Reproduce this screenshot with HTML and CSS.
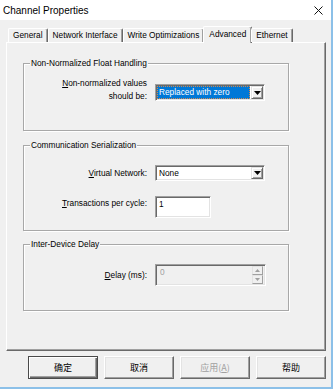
FILE: index.html
```html
<!DOCTYPE html>
<html>
<head>
<meta charset="utf-8">
<link rel="stylesheet" href="styles.css">
</head>
<body>
<div class="window">
  <div class="titlebar">
    <span class="title">Channel Properties</span>
    <svg class="close" width="9" height="9" viewBox="0 0 9 9"><path d="M0.5 0.5 L8.5 8.5 M8.5 0.5 L0.5 8.5" stroke="#111" stroke-width="1" fill="none"/></svg>
  </div>
  <div class="tabs">
    <div class="tab">General</div>
    <div class="tab">Network Interface</div>
    <div class="tab">Write Optimizations</div>
    <div class="tab active">Advanced</div>
    <div class="tab">Ethernet</div>
  </div>
  <div class="panel">
    <div class="group g1">
      <div class="legend">Non-Normalized Float Handling</div>
      <div class="row row-end">
        <div class="label"><u>N</u>on-normalized values<br>should be:</div>
        <div class="combo combo-sel">
          <div class="value"><span class="hl">Replaced with zero</span></div>
          <div class="drop"><svg width="7" height="4" viewBox="0 0 7 4"><path d="M0 0 H7 L3.5 4 Z" fill="#000"/></svg></div>
        </div>
      </div>
    </div>
    <div class="group g2">
      <div class="legend">Communication Serialization</div>
      <div class="row">
        <div class="label"><u>V</u>irtual Network:</div>
        <div class="combo">
          <div class="value"><span class="plain">None</span></div>
          <div class="drop"><svg width="7" height="4" viewBox="0 0 7 4"><path d="M0 0 H7 L3.5 4 Z" fill="#000"/></svg></div>
        </div>
      </div>
      <div class="row row-top">
        <div class="label label-top"><u>T</u>ransactions per cycle:</div>
        <div class="edit">1</div>
      </div>
    </div>
    <div class="group g3">
      <div class="legend">Inter-Device Delay</div>
      <div class="row">
        <div class="label"><u>D</u>elay (ms):</div>
        <div class="spin">
          <div class="spin-value">0</div>
          <div class="spin-btns">
            <div class="sbtn"><svg width="5" height="3" viewBox="0 0 5 3"><path d="M0 3 H5 L2.5 0 Z" fill="#a0a0a0"/></svg></div>
            <div class="sbtn"><svg width="5" height="3" viewBox="0 0 5 3"><path d="M0 0 H5 L2.5 3 Z" fill="#a0a0a0"/></svg></div>
          </div>
        </div>
      </div>
    </div>
  </div>
  <div class="buttons">
    <div class="btn btn-default">确定</div>
    <div class="btn">取消</div>
    <div class="btn btn-disabled">应用(<u>A</u>)</div>
    <div class="btn">帮助</div>
  </div>
</div>
</body>
</html>
```
FILE: styles.css
```css
html, body {
  margin: 0;
  padding: 0;
  background: #f0f0f0;
}
body {
  font-family: "Liberation Sans", Arial, sans-serif;
  font-size: 8.3px;
  color: #000;
}
.window {
  width: 333px;
  height: 389px;
  box-sizing: border-box;
  background: #f0f0f0;
  border-right: 2px solid #8cc0e8;
  border-bottom: 2px solid #8cc0e8;
  display: flex;
  flex-direction: column;
}
.titlebar {
  height: 20px;
  flex: none;
  background: #fff;
  display: flex;
  align-items: center;
  justify-content: space-between;
  padding: 0 8px 0 3px;
}
.title {
  font-size: 10px;
  color: #000;
}
.close {
  display: block;
}
.tabs {
  height: 22px;
  flex: none;
  display: flex;
  align-items: flex-end;
  padding-left: 8px;
  position: relative;
  z-index: 2;
}
.tab {
  height: 14px;
  box-sizing: border-box;
  padding: 0 4px;
  line-height: 13px;
  border-top: 1px solid #fff;
  border-left: 1px solid #fff;
  border-right: 1px solid #696969;
  border-radius: 2px 2px 0 0;
  box-shadow: inset -1px 0 #a0a0a0;
  white-space: nowrap;
  color: #000;
}
.tab.active {
  height: 17px;
  margin: 0 -1px -1px -1px;
  padding: 0 5px;
  line-height: 15px;
  background: #f0f0f0;
}
.panel {
  height: 309px;
  flex: none;
  box-sizing: border-box;
  margin: 0 5px 0 6px;
  border-top: 1px solid #fff;
  border-left: 1px solid #fff;
  border-right: 1px solid #696969;
  border-bottom: 1px solid #696969;
  box-shadow: inset -1px -1px #a0a0a0;
  padding: 20px 0 0 16px;
}
.group {
  width: 266px;
  box-sizing: border-box;
  border: 1px solid #a8a8a8;
  box-shadow: inset 1px 1px #fff, 1px 1px #fff;
  position: relative;
  display: flex;
  flex-direction: column;
}
.g1 {
  height: 68px;
  padding-top: 13px;
}
.g2 {
  height: 86px;
  margin-top: 14px;
  padding-top: 19px;
  gap: 15px;
}
.g3 {
  height: 67px;
  margin-top: 13px;
  padding-top: 19px;
}
.legend {
  position: absolute;
  top: -7px;
  left: 6px;
  padding: 0 1px;
  background: #f0f0f0;
  line-height: 12px;
}
.row {
  display: grid;
  grid-template-columns: 123px auto;
  column-gap: 8px;
  align-items: center;
}
.row-end {
  align-items: end;
}
.row-top {
  align-items: start;
}
.label {
  text-align: right;
  line-height: 13px;
  white-space: nowrap;
}
.label-top {
  padding-top: 1px;
}
.combo {
  width: 110px;
  height: 16px;
  box-sizing: border-box;
  border: 1px solid;
  border-color: #a0a0a0 #fff #fff #a0a0a0;
  box-shadow: inset 1px 1px #696969, inset -1px -1px #e3e3e3;
  background: #fff;
  display: flex;
  padding: 1px 1px 1px 1px;
  gap: 1px;
}
.combo-sel {
  height: 17px;
  margin-bottom: 2px;
}
.value {
  flex: 1;
  display: flex;
  min-width: 0;
}
.hl {
  flex: 1;
  background: #0078d7;
  color: #fff;
  line-height: 13px;
  padding-left: 2px;
  outline: 1px dotted #d08a50;
  outline-offset: -1px;
  white-space: nowrap;
}
.plain {
  line-height: 12px;
  padding-left: 2px;
}
.drop {
  width: 12px;
  flex: none;
  box-sizing: border-box;
  border: 1px solid;
  border-color: #e3e3e3 #696969 #696969 #e3e3e3;
  box-shadow: inset 1px 1px #fff, inset -1px -1px #a0a0a0;
  background: #f0f0f0;
  display: flex;
  align-items: center;
  justify-content: center;
}
.drop svg {
  display: block;
}
.edit {
  width: 56px;
  height: 22px;
  box-sizing: border-box;
  border: 1px solid;
  border-color: #a0a0a0 #fff #fff #a0a0a0;
  box-shadow: inset 1px 1px #696969, inset -1px -1px #e3e3e3;
  background: #fff;
  padding: 2px 3px;
  line-height: 11px;
}
.spin {
  width: 111px;
  height: 22px;
  box-sizing: border-box;
  border: 1px solid;
  border-color: #a0a0a0 #fff #fff #a0a0a0;
  box-shadow: inset 1px 1px #696969, inset -1px -1px #e3e3e3;
  background: #f0f0f0;
  display: flex;
  padding: 1px 2px 1px 1px;
}
.spin-value {
  flex: 1;
  color: #a0a0a0;
  padding: 1px 3px;
  line-height: 11px;
}
.spin-btns {
  width: 11px;
  display: flex;
  flex-direction: column;
}
.sbtn {
  flex: 1;
  box-sizing: border-box;
  border: 1px solid;
  border-color: #e3e3e3 #a0a0a0 #a0a0a0 #e3e3e3;
  background: #f0f0f0;
  display: flex;
  align-items: center;
  justify-content: center;
}
.sbtn svg {
  display: block;
}
.buttons {
  flex: none;
  display: flex;
  justify-content: flex-end;
  gap: 6px;
  margin-top: 5px;
  padding-right: 5px;
}
.btn {
  width: 70px;
  height: 23px;
  box-sizing: border-box;
  border: 1px solid;
  border-color: #fff #696969 #696969 #fff;
  box-shadow: inset -1px -1px #a0a0a0, inset 1px 1px #e3e3e3;
  background: #f0f0f0;
  display: flex;
  align-items: center;
  justify-content: center;
  font-family: "Noto Sans CJK SC", "Liberation Sans", sans-serif;
  font-size: 9px;
  color: #000;
}
.btn-default {
  border: 1px solid #4a4a4a;
  box-shadow: inset 1px 1px #fff, inset -1px -1px #696969, inset -2px -2px #a0a0a0;
}
.btn-disabled {
  color: #a0a0a0;
}
```
